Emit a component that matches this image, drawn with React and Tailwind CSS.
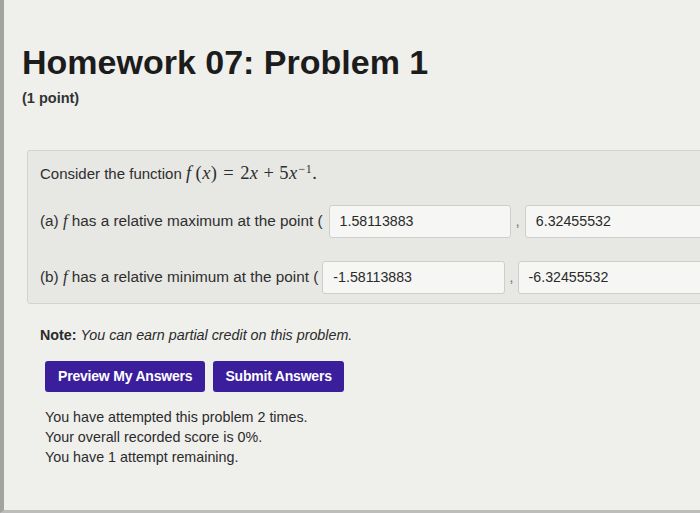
import React from "react";

const sans = { fontFamily: '"Liberation Sans", Arial, sans-serif' };
const serif = { fontFamily: '"Liberation Serif", "Times New Roman", serif' };

const AnswerBox = ({ value, className = "" }) => (
  <div
    className={`h-[33px] flex items-center px-[10px] bg-[#f6f6f4] border border-[#cdcdca] rounded-[3px] text-[14.2px] text-[#2a2a2a] shrink-0 ${className}`}
  >
    {value}
  </div>
);

const Fn = ({ children }) => (
  <span className="italic text-[16.5px]" style={serif}>
    {children}
  </span>
);

export default function App() {
  return (
    <div
      className="w-[700px] h-[513px] overflow-hidden bg-[#efefec] border-l-4 border-[#a3a3a1] border-b-[3px] border-b-[#bdbdbb] pl-[18px] text-[#2b2b2b]"
      style={sans}
    >
      <h1 className="pt-[45px] text-[34px] leading-[34px] font-bold text-[#1c1c1c]">
        Homework 07: Problem 1
      </h1>
      <p className="mt-[10px] text-[14.5px] leading-[18px] font-bold text-[#333]">(1 point)</p>

      <div className="mt-[43px] ml-[5px] w-[720px] bg-[#e7e7e4] border border-[#d3d3d0] rounded-[3px] pl-[12px] pt-[11px] pb-[9px]">
        <div className="h-[24px] flex items-center text-[15px] text-[#2e2e2e]">
          <span>Consider the function&nbsp;</span>
          <span className="text-[18.5px] whitespace-nowrap tracking-[0.4px]" style={serif}>
            <i>f</i>&thinsp;(<i>x</i>)<span className="mx-[6px]">=</span>2<i>x</i>
            <span className="mx-[5px]">+</span>5<i>x</i>
            <sup className="text-[12px] ml-[1px]">−1</sup>.
          </span>
        </div>

        <div className="mt-[19px] flex items-center text-[15.3px] text-[#2e2e2e]">
          <span className="whitespace-nowrap">
            (a) <Fn>f</Fn> has a relative maximum at the point (
          </span>
          <AnswerBox value="1.58113883" className="ml-[6px] w-[182px]" />
          <span className="mx-[5px] text-[#777]">,</span>
          <AnswerBox value="6.32455532" className="w-[200px]" />
        </div>

        <div className="mt-[23px] flex items-center text-[15.3px] text-[#2e2e2e]">
          <span className="whitespace-nowrap">
            (b) <Fn>f</Fn> has a relative minimum at the point (
          </span>
          <AnswerBox value="-1.58113883" className="ml-[4px] w-[183px]" />
          <span className="mx-[4px] text-[#777]">,</span>
          <AnswerBox value="-6.32455532" className="w-[200px]" />
        </div>
      </div>

      <p className="mt-[22px] ml-[18px] text-[14.3px] leading-[18px] text-[#2b2b2b]">
        <span className="font-bold">Note:</span> <i>You can earn partial credit on this problem.</i>
      </p>

      <div className="mt-[17px] ml-[23px] flex gap-[8px]">
        <button className="h-[31px] px-[13px] bg-[#3a1e9b] text-white text-[14px] font-bold rounded-[3px] tracking-[-0.2px]">
          Preview My Answers
        </button>
        <button className="h-[31px] px-[12px] bg-[#3a1e9b] text-white text-[14px] font-bold rounded-[3px] tracking-[-0.2px]">
          Submit Answers
        </button>
      </div>

      <div className="mt-[15px] ml-[23px] text-[14.3px] leading-[20px] text-[#2b2b2b]">
        <p>You have attempted this problem 2 times.</p>
        <p>Your overall recorded score is 0%.</p>
        <p>You have 1 attempt remaining.</p>
      </div>
    </div>
  );
}
